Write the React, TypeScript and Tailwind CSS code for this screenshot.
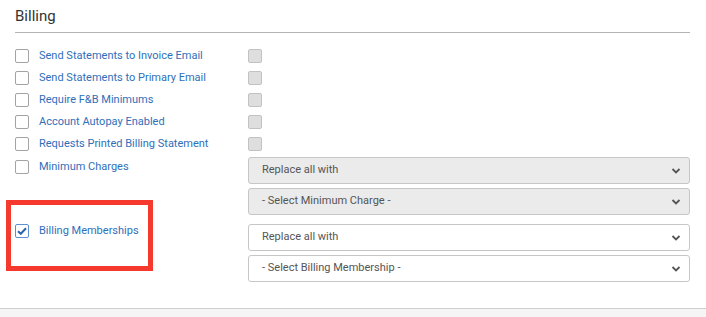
import { ReactNode } from 'react';

const rows = [
  'Send Statements to Invoice Email',
  'Send Statements to Primary Email',
  'Require F&B Minimums',
  'Account Autopay Enabled',
  'Requests Printed Billing Statement',
];

function Checkbox({ checked = false }: { checked?: boolean }) {
  if (checked) {
    return (
      <span className="flex h-[14px] w-[14px] shrink-0 items-center justify-center rounded-[2px] border border-[#5d8fd0] bg-white">
        <svg width="10" height="8" viewBox="0 0 10 8">
          <path d="M1 4.2 L3.8 6.8 L9 1.3" fill="none" stroke="#2a62ad" strokeWidth="2" />
        </svg>
      </span>
    );
  }
  return <span className="h-[14px] w-[14px] shrink-0 rounded-[2px] border border-[#a3a3a3] bg-white" />;
}

function DisabledBox() {
  return <span className="h-[14px] w-[14px] rounded-[2px] border border-[#c2c2c2] bg-[#dedede]" />;
}

function Label({ children }: { children: ReactNode }) {
  return <span className="text-[11px] leading-[14px] text-[#2f6fba]">{children}</span>;
}

function Select({ text, disabled }: { text: string; disabled?: boolean }) {
  return (
    <div
      className={`flex h-[27px] items-center justify-between rounded-[3px] border border-[#c6c6c6] pl-[13px] pr-[8px] ${
        disabled ? 'bg-[#ebebeb]' : 'bg-white'
      }`}
    >
      <span className="text-[11px] text-[#555]">{text}</span>
      <svg width="10" height="6" viewBox="0 0 10 6">
        <path d="M1.5 1 L5 4.5 L8.5 1" fill="none" stroke="#555" strokeWidth="1.8" />
      </svg>
    </div>
  );
}

export default function App() {
  return (
    <div className="flex h-[317px] w-[706px] flex-col bg-white font-['Roboto',sans-serif]">
      <div className="flex-1 pl-[15px] pr-[16px]">
        <h2 className="border-b border-[#b4b4b4] pt-[6px] pb-[6px] text-[15px] leading-[20px] text-[#333]">Billing</h2>

        <div className="mt-[12px] flex flex-col">
          {rows.map((r) => (
            <div key={r} className="flex h-[22px] items-center">
              <div className="flex w-[233px] items-center gap-[10px]">
                <Checkbox />
                <Label>{r}</Label>
              </div>
              <DisabledBox />
            </div>
          ))}

          {/* Minimum Charges */}
          <div className="flex">
            <div className="flex h-[22px] w-[233px] items-center gap-[10px] pt-[2px]">
              <Checkbox />
              <Label>Minimum Charges</Label>
            </div>
            <div className="flex flex-1 flex-col gap-[4px] pt-[2px]">
              <Select text="Replace all with" disabled />
              <Select text="- Select Minimum Charge -" disabled />
            </div>
          </div>

          {/* Billing Memberships */}
          <div className="mt-[9px] flex">
            <div className="relative w-[233px]">
              <div className="flex items-center gap-[10px]">
                <Checkbox checked />
                <Label>Billing Memberships</Label>
              </div>
              <div className="absolute left-[-9px] top-[-24px] h-[71px] w-[147px] border-[5px] border-[#f5392c]" />
            </div>
            <div className="flex flex-1 flex-col gap-[4px]">
              <Select text="Replace all with" />
              <Select text="- Select Billing Membership -" />
            </div>
          </div>
        </div>
      </div>
      <div className="h-[9px] border-t border-[#cfcfcf] bg-[#f5f5f5]" />
    </div>
  );
}
